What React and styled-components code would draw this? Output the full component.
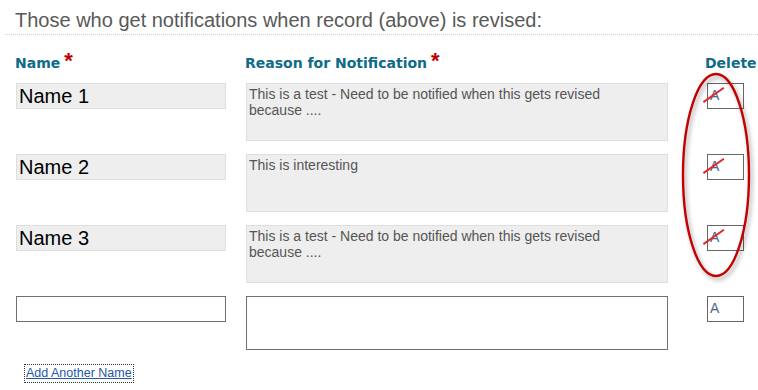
import React from "react";
import styled, { createGlobalStyle } from "styled-components";

const GlobalStyle = createGlobalStyle`
  body {
    margin: 0;
    background: #fff;
    font-family: "Liberation Sans", Arial, sans-serif;
  }
`;

const rows = [
  { name: "Name 1", reason: "This is a test - Need to be notified when this gets revised\nbecause ....", struck: true },
  { name: "Name 2", reason: "This is interesting", struck: true },
  { name: "Name 3", reason: "This is a test - Need to be notified when this gets revised\nbecause ....", struck: true },
];

function App() {
  return (
    <Page>
      <GlobalStyle />
      <Heading>Those who get notifications when record (above) is revised:</Heading>
      <HeaderRow>
        <ColLabel>
          Name<Required>*</Required>
        </ColLabel>
        <ColLabel>
          Reason for Notification<Required>*</Required>
        </ColLabel>
        <ColLabel $delete>Delete</ColLabel>
      </HeaderRow>

      {rows.map((r) => (
        <Row key={r.name}>
          <NameInput readOnly value={r.name} $filled />
          <ReasonInput readOnly value={r.reason} $filled />
          <DeleteBox $struck={r.struck}>A</DeleteBox>
        </Row>
      ))}

      <Row $last>
        <NameInput readOnly value="" />
        <ReasonInput readOnly value="" $short />
        <DeleteBox>A</DeleteBox>
      </Row>

      <AddLink href="#">Add Another Name</AddLink>

      <Ellipse width="72" height="210" viewBox="0 0 72 210">
        <ellipse cx="34" cy="103" rx="33" ry="101" fill="none" stroke="#c40000" strokeWidth="2.4" />
      </Ellipse>
    </Page>
  );
}

const Page = styled.div`
  position: relative;
  width: 758px;
  height: 390px;
  overflow: hidden;
`;

const Heading = styled.h2`
  margin: 0 0 0 5px;
  padding: 8px 0 2px 10px;
  font-size: 20px;
  line-height: 24px;
  font-weight: normal;
  color: #595959;
  border-bottom: 1px dotted #cfcfcf;
`;

const grid = `
  display: grid;
  grid-template-columns: 210px 422px 56px;
  column-gap: 20px;
  margin-left: 16px;
`;

const HeaderRow = styled.div`
  ${grid}
  margin-top: 20px;
  margin-bottom: 12px;
  margin-left: 15px;
`;

const ColLabel = styled.div`
  font-family: "DejaVu Sans", Verdana, sans-serif;
  font-weight: bold;
  font-size: 14px;
  line-height: 16px;
  color: #0f6b88;
  white-space: nowrap;
  margin-left: ${(p) => (p.$delete ? "18px" : "0")};
`;

const Required = styled.span`
  position: relative;
  top: 0;
  margin-left: 4px;
  font-family: "Liberation Sans", Arial, sans-serif;
  font-weight: bold;
  font-size: 22px;
  line-height: 0;
  color: #c00000;
`;

const Row = styled.div`
  ${grid}
  align-items: start;
  margin-bottom: 13px;
  margin-top: ${(p) => (p.$last ? "1px" : "0")};
`;

const NameInput = styled.input`
  box-sizing: border-box;
  width: 210px;
  height: 26px;
  margin: 0;
  padding: 0 2px;
  font-family: "Liberation Sans", Arial, sans-serif;
  font-size: 20px;
  color: #000;
  background: ${(p) => (p.$filled ? "#eeeeee" : "#fff")};
  border: 1px solid ${(p) => (p.$filled ? "#dedede" : "#707070")};
  border-radius: 0;
  outline: none;
`;

const ReasonInput = styled.textarea`
  box-sizing: border-box;
  display: block;
  width: 422px;
  height: ${(p) => (p.$short ? "54px" : "58px")};
  margin: 0;
  padding: 2px 2px;
  resize: none;
  overflow: hidden;
  font-family: "Liberation Sans", Arial, sans-serif;
  font-size: 14px;
  line-height: 16px;
  color: #555;
  background: ${(p) => (p.$filled ? "#eeeeee" : "#fff")};
  border: 1px solid ${(p) => (p.$filled ? "#dedede" : "#707070")};
  border-radius: 0;
  outline: none;
`;

const DeleteBox = styled.div`
  position: relative;
  justify-self: end;
  box-sizing: border-box;
  width: 37px;
  height: 26px;
  padding-left: 2px;
  border: 1px solid #666;
  background: #fff;
  font-family: "Liberation Sans", Arial, sans-serif;
  font-size: 14px;
  line-height: 22px;
  color: #4d6691;

  &::after {
    content: "";
    display: ${(p) => (p.$struck ? "block" : "none")};
    position: absolute;
    left: -7px;
    top: 10px;
    width: 25px;
    height: 1.5px;
    background: #dd2a2a;
    transform: rotate(-35deg);
  }
`;

const AddLink = styled.a`
  display: inline-block;
  margin: 1px 0 0 26px;
  font-size: 12.5px;
  line-height: 15px;
  color: #2457a6;
  text-decoration: underline;
  outline: 1px dotted #333;
  outline-offset: 1px;
`;

const Ellipse = styled.svg`
  position: absolute;
  left: 682px;
  top: 72px;
  overflow: visible;
  filter: drop-shadow(2px 3px 2px rgba(0, 0, 0, 0.35));
`;

export default App;
